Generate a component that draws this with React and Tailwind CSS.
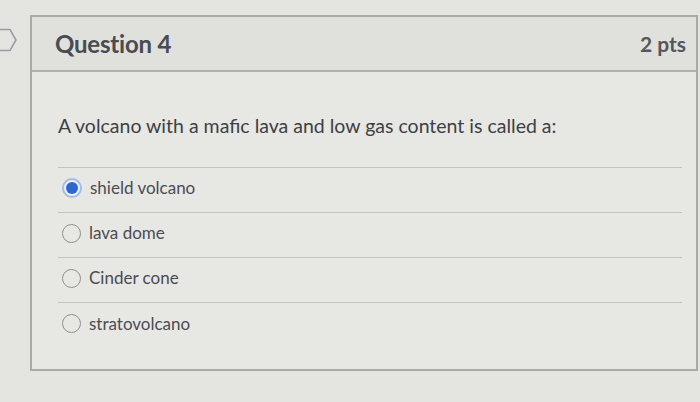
const options = [
  { label: 'shield volcano', checked: true },
  { label: 'lava dome', checked: false },
  { label: 'Cinder cone', checked: false },
  { label: 'stratovolcano', checked: false },
]

function Radio({ checked }) {
  if (checked) {
    return (
      <span className="w-[20px] h-[20px] rounded-full border-2 border-[#a3bbe8] bg-[#eef1f7] flex items-center justify-center shrink-0">
        <span className="w-[12px] h-[12px] rounded-full bg-[#2f66cf]" />
      </span>
    )
  }
  return <span className="w-[19px] h-[19px] rounded-full border-[1.5px] border-[#8f8f90] shrink-0" />
}

export default function App() {
  return (
    <div
      className="w-[700px] h-[402px] bg-[#e4e4e1] pt-[15px] pl-[30px] pr-[2px] overflow-hidden relative"
      style={{ fontFamily: 'Lato, "Open Sans", sans-serif' }}
    >
      {/* prev arrow peeking in on the left */}
      <svg className="absolute left-0 top-[28px]" width="18" height="24" viewBox="0 0 18 24">
        <path d="M-2 1.5 H10 L16 12 L10 22.5 H-2" fill="none" stroke="#9b9ba0" strokeWidth="1.6" />
      </svg>

      <div className="border-2 border-[#a9a9a7] h-[356px] bg-[#e7e7e4]">
        <div className="h-[55px] bg-[#e0e0dd] border-b-2 border-[#b0b0ae] flex items-center justify-between pl-[23px] pr-[10px]">
          <span className="text-[24px] font-bold text-[#4a4b52] tracking-[-0.2px]">Question 4</span>
          <span className="text-[21px] font-bold text-[#56575c]">2 pts</span>
        </div>

        <div className="pl-[26px] pr-[14px]">
          <div className="pt-[43px] pb-[30px] border-b border-[#c3c3c0] text-[19.5px] leading-[22px] text-[#3e3f45]">
            A volcano with a mafic lava and low gas content is called a:
          </div>

          {options.map((o, i) => (
            <div
              key={o.label}
              className={
                'h-[45px] flex items-center gap-[8px] pl-[4px] pb-[4px] ' +
                (i < options.length - 1 ? 'border-b border-[#c3c3c0]' : '')
              }
            >
              <Radio checked={o.checked} />
              <span className="text-[17px] text-[#4b4c52]">{o.label}</span>
            </div>
          ))}
        </div>
      </div>
    </div>
  )
}
